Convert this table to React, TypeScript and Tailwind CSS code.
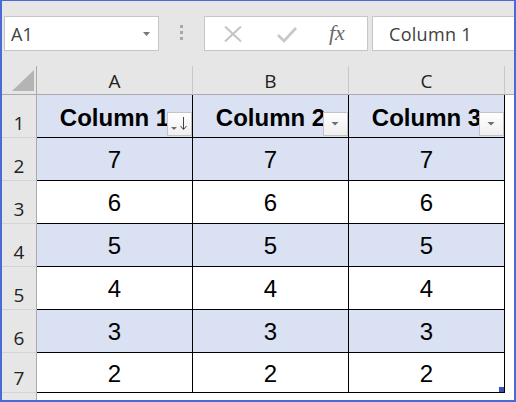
import React from "react";

const rows = [
  { n: "2", v: "7", blue: true },
  { n: "3", v: "6", blue: false },
  { n: "4", v: "5", blue: true },
  { n: "5", v: "4", blue: false },
  { n: "6", v: "3", blue: true },
  { n: "7", v: "2", blue: false },
];

function FilterBtn({ sorted }: { sorted?: boolean }) {
  return (
    <div className="absolute right-0 bottom-[1px] w-[25px] h-[24px] border border-[#c4c4c4] bg-gradient-to-b from-white to-[#efefef]">
      {sorted ? (
        <svg width="23" height="22" viewBox="0 0 23 22" className="block">
          <polygon points="3,14 9,14 6,17" fill="#6e6e6e" />
          <line x1="15.5" y1="4" x2="15.5" y2="16" stroke="#444" strokeWidth="1" />
          <polyline points="12.5,13 15.5,16.5 18.5,13" fill="none" stroke="#444" strokeWidth="1" />
        </svg>
      ) : (
        <svg width="23" height="22" viewBox="0 0 23 22" className="block">
          <polygon points="7.5,9 14.5,9 11,12.5" fill="#6e6e6e" />
        </svg>
      )}
    </div>
  );
}

export default function App() {
  const cellFont = { fontFamily: '"Liberation Sans", Arial, sans-serif' };
  const uiFont = { fontFamily: '"Open Sans", "Noto Sans", sans-serif' };
  return (
    <div className="w-[516px] h-[402px] border-[#4a6bd6] border-t border-l-2 border-r-2 border-b-2 bg-white flex flex-col overflow-hidden">
      {/* toolbar */}
      <div className="h-[65px] bg-[#e6e6e6] flex items-start pt-[15px] shrink-0" style={uiFont}>
        <div className="ml-[2px] w-[155px] h-[35px] bg-white border border-[#c6c6c6] flex items-center pl-[6px] pr-[8px] text-[18px] text-[#404040]">
          <span className="flex-1 leading-none">A1</span>
          <svg width="7" height="4" viewBox="0 0 7 4"><polygon points="0,0 7,0 3.5,4" fill="#777" /></svg>
        </div>
        <div className="w-[45px] h-[35px] flex flex-col items-center pt-[9px] gap-[3px]">
          <div className="w-[3px] h-[3px] bg-[#a8a8a8]" />
          <div className="w-[3px] h-[3px] bg-[#a8a8a8]" />
          <div className="w-[3px] h-[3px] bg-[#a8a8a8]" />
        </div>
        <div className="w-[164px] h-[35px] bg-white border border-[#c6c6c6] relative">
          <svg className="absolute left-[19px] top-[9px]" width="18" height="16" viewBox="0 0 18 16">
            <path d="M1 0.5 L17 15.5 M17 0.5 L1 15.5" stroke="#c4c4c4" strokeWidth="2" fill="none" />
          </svg>
          <svg className="absolute left-[72px] top-[10px]" width="20" height="16" viewBox="0 0 20 16">
            <path d="M1 8 L7 14 L19 1" stroke="#c8c8c8" strokeWidth="2.8" fill="none" />
          </svg>
          <span className="absolute left-[124px] top-[5px] text-[22px] italic text-[#6a6a6a] leading-none" style={{ fontFamily: '"Liberation Serif", "Times New Roman", serif' }}>
            fx
          </span>
        </div>
        <div className="ml-[4px] flex-1 h-[35px] bg-white border-y border-l border-[#c6c6c6] flex items-center pl-[16px] text-[18px] text-[#404040] leading-none tracking-[0.3px]">
          Column 1
        </div>
      </div>

      {/* column headers */}
      <div className="h-[29px] flex shrink-0 bg-[#e6e6e6] text-[19px] text-[#222]" style={uiFont}>
        <div className="w-[35px] border-r border-b border-[#ababab] relative">
          <svg className="absolute left-[10px] top-[4px]" width="22" height="21" viewBox="0 0 22 21">
            <polygon points="22,0 22,21 0,21" fill="#b4b4b4" />
          </svg>
        </div>
        {["A", "B", "C"].map((c) => (
          <div key={c} className="w-[156px] border-r border-b border-r-[#c8c8c8] border-b-[#ababab] flex items-end justify-center pb-[3px]">
            <span className="leading-none">{c}</span>
          </div>
        ))}
        <div className="flex-1 border-b border-[#ababab]" />
      </div>

      {/* row 1 (table header) */}
      <div className="h-[43px] flex shrink-0">
        <div className="w-[35px] bg-[#e6e6e6] border-r border-b border-r-[#ababab] border-b-[#d4d4d4] flex items-end justify-center pb-[4px] text-[19px] text-[#222]" style={uiFont}>
          <span className="leading-none">1</span>
        </div>
        {["Column 1", "Column 2", "Column 3"].map((t, i) => (
          <div key={t} className="w-[156px] bg-[#d9e1f2] border-r border-b border-black relative flex items-center justify-center pt-[4px] text-[24px] font-bold text-black" style={cellFont}>
            <span className="leading-none">{t}</span>
            <FilterBtn sorted={i === 0} />
          </div>
        ))}
        <div className="flex-1 bg-white" />
      </div>

      {rows.map((r, idx) => (
        <div key={r.n} className={idx === rows.length - 1 ? "h-[40px] flex shrink-0" : "h-[43px] flex shrink-0"}>
          <div className="w-[35px] bg-[#e6e6e6] border-r border-b border-r-[#ababab] border-b-[#d4d4d4] flex items-end justify-center pb-[4px] text-[19px] text-[#222]" style={uiFont}>
            <span className="leading-none">{r.n}</span>
          </div>
          {[0, 1, 2].map((c) => (
            <div key={c} className={(r.blue ? "bg-[#d9e1f2] " : "bg-white ") + "w-[156px] border-r border-b border-black relative flex items-center justify-center pt-[2px] text-[24px] text-black"} style={cellFont}>
              <span className="leading-none">{r.v}</span>
              {idx === rows.length - 1 && c === 2 ? (
                <div className="absolute right-0 bottom-0 w-[5px] h-[5px] bg-[#3b52b4]" />
              ) : null}
            </div>
          ))}
          <div className="flex-1 bg-white" />
        </div>
      ))}

      <div className="flex-1 flex">
        <div className="w-[35px] bg-[#e6e6e6] border-r border-[#ababab]" />
        <div className="flex-1 bg-white" />
      </div>
    </div>
  );
}
